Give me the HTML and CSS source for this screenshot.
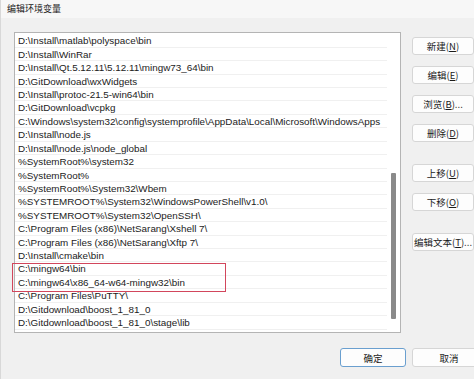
FILE: index.html
```html
<!DOCTYPE html>
<html lang="zh-CN">
<head>
    <meta charset="UTF-8">
    <meta name="viewport" content="width=device-width, initial-scale=1.0">
    <title>编辑环境变量</title>
    <link rel="stylesheet" href="styles.css">
</head>
<body>
    <div class="window">
        <div class="titlebar">编辑环境变量</div>
        <div class="main">
            <div class="listbox">
                <div class="rows">
                    <div class="row">D:\Install\matlab\polyspace\bin</div>
                    <div class="row">D:\Install\WinRar</div>
                    <div class="row">D:\Install\Qt.5.12.11\5.12.11\mingw73_64\bin</div>
                    <div class="row">D:\GitDownload\wxWidgets</div>
                    <div class="row">D:\Install\protoc-21.5-win64\bin</div>
                    <div class="row">D:\GitDownload\vcpkg</div>
                    <div class="row">C:\Windows\system32\config\systemprofile\AppData\Local\Microsoft\WindowsApps</div>
                    <div class="row">D:\Install\node.js</div>
                    <div class="row">D:\Install\node.js\node_global</div>
                    <div class="row">%SystemRoot%\system32</div>
                    <div class="row">%SystemRoot%</div>
                    <div class="row">%SystemRoot%\System32\Wbem</div>
                    <div class="row">%SYSTEMROOT%\System32\WindowsPowerShell\v1.0\</div>
                    <div class="row">%SYSTEMROOT%\System32\OpenSSH\</div>
                    <div class="row">C:\Program Files (x86)\NetSarang\Xshell 7\</div>
                    <div class="row">C:\Program Files (x86)\NetSarang\Xftp 7\</div>
                    <div class="row">D:\Install\cmake\bin</div>
                    <div class="row">C:\mingw64\bin</div>
                    <div class="row">C:\mingw64\x86_64-w64-mingw32\bin</div>
                    <div class="row">C:\Program Files\PuTTY\</div>
                    <div class="row">D:\Gitdownload\boost_1_81_0</div>
                    <div class="row">D:\Gitdownload\boost_1_81_0\stage\lib</div>
                </div>
                <div class="scrollbar"><div class="thumb"></div></div>
            </div>
            <div class="side">
                <button class="btn">新建(<u>N</u>)</button>
                <button class="btn">编辑(<u>E</u>)</button>
                <button class="btn">浏览(<u>B</u>)...</button>
                <button class="btn">删除(<u>D</u>)</button>
                <button class="btn group">上移(<u>U</u>)</button>
                <button class="btn">下移(<u>O</u>)</button>
                <button class="btn group">编辑文本(<u>T</u>)...</button>
            </div>
        </div>
        <div class="footer">
            <button class="btn btn-default">确定</button>
            <button class="btn btn-cancel">取消</button>
        </div>
        <div class="highlight"></div>
    </div>
</body>
</html>
```

FILE: styles.css
```css
body {
    margin: 0;
    padding: 0;
    width: 474px;
    height: 379px;
    overflow: hidden;
    background: #f0f0f0;
    font-family: "Liberation Sans", "Noto Sans CJK SC", sans-serif;
    color: #1b1b1b;
}
.window {
    position: relative;
    width: 488px;
    height: 379px;
    background: #f0f0f0;
    border-left: 1px solid #d8d8d8;
    box-sizing: border-box;
}
.titlebar {
    height: 18px;
    line-height: 17px;
    padding-left: 6px;
    font-family: "Noto Sans CJK SC", sans-serif;
    font-size: 9px;
    color: #222;
    background: #f7f7f7;
}
.main {
    display: flex;
    margin-top: 14px;
    padding-left: 13px;
}
.listbox {
    display: flex;
    width: 387px;
    height: 301px;
    box-sizing: border-box;
    background: #fff;
    border: 1px solid #b4b4b4;
}
.rows {
    flex: 1;
    padding-top: 1.3px;
}
.row {
    height: 13.43px;
    line-height: 13.43px;
    box-sizing: border-box;
    padding-left: 3px;
    font-size: 9.85px;
    border-bottom: 1px solid #f0f0f0;
    white-space: nowrap;
}
.scrollbar {
    width: 13px;
}
.thumb {
    width: 5px;
    height: 146px;
    margin: 140px 0 0 4px;
    background: #8a8a8a;
    border-radius: 1px;
}
.side {
    display: flex;
    flex-direction: column;
    margin-left: 11px;
    padding-top: 5px;
}
.btn {
    height: 18px;
    padding: 0;
    font-family: "Noto Sans CJK SC", sans-serif;
    font-size: 9.5px;
    color: #1b1b1b;
    white-space: nowrap;
    background: #fdfdfd;
    border: 1px solid #d6d6d6;
    border-radius: 3px;
}
.side .btn {
    width: 62px;
}
.side .btn + .btn {
    margin-top: 11px;
}
.side .btn.group {
    margin-top: 22px;
}
.footer {
    display: flex;
    justify-content: flex-end;
    gap: 6px;
    margin-top: 15px;
    padding-right: 2px;
}
.footer .btn {
    height: 19px;
}
.btn-default {
    width: 66px;
    border-color: #6a9fcf;
}
.btn-cancel {
    width: 74px;
}
.highlight {
    position: absolute;
    left: 11px;
    top: 263px;
    width: 214px;
    height: 29px;
    box-sizing: border-box;
    border: 1.5px solid #d2465c;
}
```
